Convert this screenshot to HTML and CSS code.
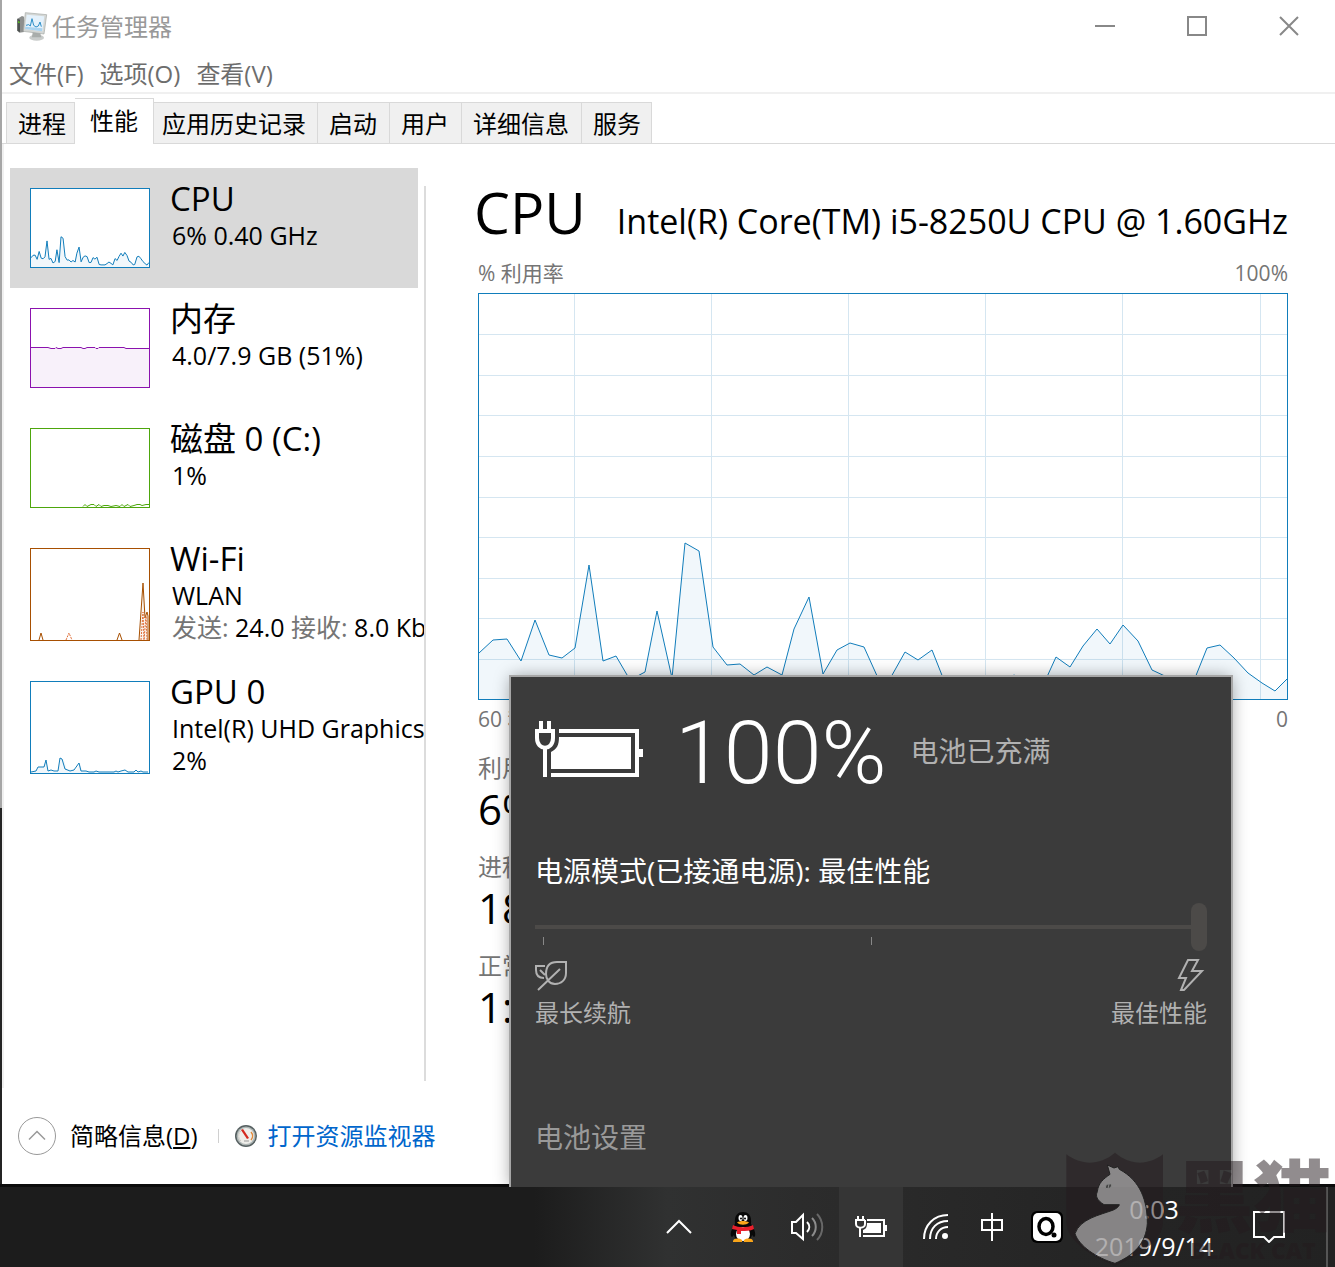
FILE: index.html
```html
<!DOCTYPE html>
<html lang="zh-CN">
<head>
    <meta charset="UTF-8">
    <meta name="viewport" content="width=device-width, initial-scale=1.0">
    <title>任务管理器</title>
    <link rel="stylesheet" href="styles.css">
</head>
<body>
    <main class="window">
        <header class="title-bar">
            <svg class="app-icon" width="32" height="30" viewBox="0 0 96 90">
                <path d="M4 20l14-8 6 2v46l-14 2-6-6z" fill="#8d8f8e"/>
                <path d="M4 20l8 3v38l-8-5z" fill="#4d5250"/>
                <path d="M6 27l5 2v5l-5-2z" fill="#58c322"/>
                <ellipse cx="62" cy="77" rx="22" ry="9" fill="#c9cccb"/>
                <path d="M50 60h22l4 16H48z" fill="#a9adab"/>
                <path d="M28 2l64 6-8 58-62-8z" fill="#d4d7d5" stroke="#a3a7a5" stroke-width="2"/>
                <path d="M32 8l53 5-6 45-52-7z" fill="#e4f1fb"/>
                <path d="M28 44l51 5-1 9-51-7z" fill="#a9d3f0"/>
                <path d="M30 40l8-2 5 4 5-22 5 20 7 5 7-3 5-12 4 14" fill="none" stroke="#2d8fc8" stroke-width="3"/>
            </svg>
            <h1 class="window-title">任务管理器</h1>
            <div class="window-buttons">
                <button type="button" aria-label="最小化">
                    <svg width="20" height="20" viewBox="0 0 20 20"><path d="M0 10h20"/></svg>
                </button>
                <button type="button" aria-label="最大化">
                    <svg width="20" height="20" viewBox="0 0 20 20"><path d="M1 1h18v18H1z"/></svg>
                </button>
                <button type="button" aria-label="关闭">
                    <svg width="20" height="20" viewBox="0 0 20 20"><path d="M1 1l18 18M19 1L1 19"/></svg>
                </button>
            </div>
        </header>

        <nav class="menu-bar">
            <button type="button">文件(F)</button>
            <button type="button">选项(O)</button>
            <button type="button">查看(V)</button>
        </nav>

        <div class="tabs" role="tablist">
            <button type="button" role="tab" class="tab">进程</button>
            <button type="button" role="tab" class="tab active" aria-selected="true">性能</button>
            <button type="button" role="tab" class="tab tight">应用历史记录</button>
            <button type="button" role="tab" class="tab">启动</button>
            <button type="button" role="tab" class="tab">用户</button>
            <button type="button" role="tab" class="tab">详细信息</button>
            <button type="button" role="tab" class="tab">服务</button>
        </div>

        <div class="content">
            <aside class="sidebar">
                <ul class="device-list">
                    <li class="device selected">
                        <svg class="thumb cpu" viewBox="0 0 810 407" preserveAspectRatio="none">
                            <use href="#cpu-area" class="area"/>
                            <use href="#cpu-line" class="line"/>
                        </svg>
                        <div class="device-info">
                            <h2>CPU</h2>
                            <p>6% 0.40 GHz</p>
                        </div>
                    </li>
                    <li class="device">
                        <svg class="thumb memory" viewBox="0 0 118 78">
                            <path class="area" d="M0 39H118V78H0z"/>
                            <path class="line" d="M0 38.500h17l3 1h4l1-1 2 1h3l2-1h18l2 1h2l2-1h8l1 1h2l1-1h25l2 1h24"/>
                        </svg>
                        <div class="device-info">
                            <h2>内存</h2>
                            <p>4.0/7.9 GB (51%)</p>
                        </div>
                    </li>
                    <li class="device">
                        <svg class="thumb disk" viewBox="0 0 118 78">
                            <path class="line" d="M52 77.500l2-2 2 2 4-2h3l2 2 3-2 2 2 3-1h4l3 1 5-1 4 1 2-2 2 2 4-2 2 2 4-1 3-1h3l2 1 4-1h4"/>
                        </svg>
                        <div class="device-info">
                            <h2>磁盘 0 (C:)</h2>
                            <p>1%</p>
                        </div>
                    </li>
                    <li class="device">
                        <svg class="thumb tall wifi" viewBox="0 0 118 91">
                            <path class="area" d="M108 91l4-57 3 35 2-7 1 29z"/>
                            <path class="line" d="M8 91l2-7 2 7M86 91l2.500-7 2.500 7M108 91l4-57 2 35 2-6 1 4v24"/>
                            <path class="line dotted" d="M35 91l3-7 3 7M110 91l2-28 1 28 2-24 1 24"/>
                        </svg>
                        <div class="device-info">
                            <h2>Wi-Fi</h2>
                            <p>WLAN</p>
                            <p><span class="muted">发送:</span> 24.0 <span class="muted">接收:</span> 8.0 Kb</p>
                        </div>
                    </li>
                    <li class="device">
                        <svg class="thumb tall cpu" viewBox="0 0 118 91">
                            <path class="area" d="M0 90l6-2 2-3h5l2-7 2 11 10 1 3-14 3 2 3 9 10 1 3-7 2 8 67 1v2H0z"/>
                            <path class="line" d="M0 90l5-1 2-4h6l2-7 2 11 3-1 3 1h4l2-13 2 1 3 10 5 2 4-1 5-7 2 8h5l3 1h5l2-1 3 1h15l2-1 2 1 3-1 4-1 3 2h6l2-2 2 2 3-1 2 1h5"/>
                        </svg>
                        <div class="device-info">
                            <h2>GPU 0</h2>
                            <p>Intel(R) UHD Graphics</p>
                            <p>2%</p>
                        </div>
                    </li>
                </ul>
            </aside>

            <section class="details">
                <div class="details-header">
                    <h2>CPU</h2>
                    <p>Intel(R) Core(TM) i5-8250U CPU @ 1.60GHz</p>
                </div>
                <div class="chart-caption">
                    <span>% 利用率</span>
                    <span>100%</span>
                </div>
                <svg class="chart cpu" viewBox="0 0 808 405" preserveAspectRatio="none">
                    <defs>
                        <path id="cpu-line" vector-effect="non-scaling-stroke" d="M0 359L14 346 28 345 42 367 56 326 70 361 83 364 96 354 110 271 124 367 137 362 151 386 166 378 178 317 193 384 206 249 220 257 234 353 248 371 261 370 275 381 288 373 303 381 315 335 330 303 344 380 358 356 371 349 385 353 399 384 412 383 426 358 439 366 453 356 468 394 481 396 508 396 522 389 535 381 549 388 562 396 577 363 591 373 604 352 618 335 631 350 644 331 659 347 673 376 688 383 701 396 712 394 728 354 741 351 755 364 769 379 783 389 796 397 809 384"/>
                        <path id="cpu-area" d="M0 359L14 346 28 345 42 367 56 326 70 361 83 364 96 354 110 271 124 367 137 362 151 386 166 378 178 317 193 384 206 249 220 257 234 353 248 371 261 370 275 381 288 373 303 381 315 335 330 303 344 380 358 356 371 349 385 353 399 384 412 383 426 358 439 366 453 356 468 394 481 396 508 396 522 389 535 381 549 388 562 396 577 363 591 373 604 352 618 335 631 350 644 331 659 347 673 376 688 383 701 396 712 394 728 354 741 351 755 364 769 379 783 389 796 397 809 384V407H0z"/>
                    </defs>
                    <path class="grid" vector-effect="non-scaling-stroke" d="M95.500 0V405M232.500 0V405M369.500 0V405M506.500 0V405M643.500 0V405M781.500 0V405M0 40.500H808M0 81.500H808M0 121.500H808M0 162.500H808M0 203.500H808M0 243.500H808M0 284.500H808M0 324.500H808M0 365.500H808"/>
                    <use href="#cpu-area" class="area"/>
                    <use href="#cpu-line" class="line"/>
                </svg>
                <div class="chart-caption below">
                    <span>60 秒</span>
                    <span>0</span>
                </div>
                <dl class="stats">
                    <dt>利用率</dt>
                    <dd>6%</dd>
                    <dt>进程</dt>
                    <dd>18</dd>
                    <dt>正常</dt>
                    <dd>1:</dd>
                </dl>
            </section>
        </div>

        <footer class="window-footer">
            <button type="button" class="fewer-details">
                <svg width="38" height="38" viewBox="0 0 38 38" fill="none" stroke="#999">
                    <circle cx="19" cy="19" r="18.500"/>
                    <path d="M11 22.500l8-8 8 8" stroke-width="1.500"/>
                </svg>
                <span>简略信息(<u>D</u>)</span>
            </button>
            <a class="resource-link" href="#">
                <svg width="24" height="24" viewBox="0 0 24 24">
                    <circle cx="12" cy="12" r="11" fill="#566061"/>
                    <circle cx="12" cy="12" r="9.500" fill="#aeb6b5"/>
                    <circle cx="12" cy="12" r="8" fill="#efeeea"/>
                    <path d="M7 17a7 7 0 0 1 1-11" fill="none" stroke="#b9b5ae" stroke-dasharray="1 1"/>
                    <path d="M17 8a6 6 0 0 1 0 8" fill="none" stroke="#e0883a" stroke-width="1.500"/>
                    <path d="M7 6l2-1 6 9-2 1z" fill="#d42a20"/>
                    <path d="M10 17h5" stroke="#999"/>
                </svg>
                <span>打开资源监视器</span>
            </a>
        </footer>
    </main>

    <footer class="taskbar">
        <button type="button" aria-label="显示隐藏的图标">
            <svg width="26" height="16" viewBox="0 0 26 16" fill="none" stroke="#fff" stroke-width="2"><path d="M1 14L13 2l12 12"/></svg>
        </button>
        <button type="button" aria-label="QQ">
            <svg width="26" height="32" viewBox="0 0 26 32">
                <path d="M5 13C4 4 8 1 13 1s9 3 8 12c3 4 5 9 4 12-1 2-2 0-3-1-1 4-4 6-9 6s-8-2-9-6c-1 1-2 3-3 1-1-3 1-8 4-12z" fill="#080808"/>
                <ellipse cx="13" cy="23" rx="7" ry="7" fill="#fff"/>
                <ellipse cx="10.500" cy="7" rx="2" ry="3" fill="#fff"/>
                <ellipse cx="15.500" cy="7" rx="2" ry="3" fill="#fff"/>
                <circle cx="11" cy="7.500" r="1" fill="#000"/>
                <circle cx="15" cy="7.500" r="1" fill="#000"/>
                <path d="M7 11.500c3-2 9-2 12 0-3 3-9 3-12 0z" fill="#f9a51a"/>
                <path d="M3 14c6 3 14 3 20 0l1 4c-4 2-8 2-13 2v3H7v-4l-5-1z" fill="#e8202c"/>
                <path d="M3 30c1-3 6-3 9-1v2H3zM23 30c-1-3-6-3-9-1v2h9z" fill="#f9a51a"/>
            </svg>
        </button>
        <button type="button" aria-label="音量">
            <svg width="34" height="30" viewBox="0 0 34 30" fill="none" stroke="#fff" stroke-width="2">
                <path d="M2 10h4l7-7v24l-7-6H2z"/>
                <path d="M17 10c3 3 3 7 0 10"/>
                <path d="M22 6c5 5 5 13 0 18" stroke="#8c8c8c"/>
                <path d="M27 2c7 7 7 19 0 26" stroke="#686868"/>
            </svg>
        </button>
        <button type="button" class="pressed" aria-label="电池">
            <svg width="32" height="24" viewBox="0 0 32 24">
                <path d="M3 1v5M8 1v5M0 5h10M5 13v9" stroke="#fff" stroke-width="2" fill="none"/>
                <path d="M1 5v4c0 5 9 5 9 0V5" stroke="#fff" stroke-width="2" fill="none"/>
                <path d="M12 5h17v16H8" stroke="#fff" stroke-width="2" fill="none"/>
                <path d="M12 8h14v10H8v-3c3-1 4-3 4-7zM30 10h2v6h-2z" fill="#fff"/>
            </svg>
        </button>
        <button type="button" class="wide" aria-label="网络">
            <svg width="26" height="26" viewBox="0 0 26 26" fill="none" stroke="#fff" stroke-width="2">
                <path d="M1 25C1 11 11 1 25 1M7 25C7 14 14 7 25 7M13 25c0-7 5-12 12-12"/>
                <circle cx="22" cy="22" r="2" fill="#fff"/>
            </svg>
        </button>
        <button type="button" class="narrow" aria-label="中文输入">
            <svg width="24" height="28" viewBox="0 0 24 28" fill="none" stroke="#fff" stroke-width="2"><path d="M2 7h20v10H2zM12 0v28"/></svg>
        </button>
        <button type="button" aria-label="输入法">
            <svg width="32" height="32" viewBox="0 0 32 32">
                <rect width="32" height="32" rx="6" fill="#000"/>
                <rect x="2" y="2" width="28" height="28" rx="5" fill="#fff"/>
                <ellipse cx="15" cy="15.500" rx="7" ry="8" fill="none" stroke="#000" stroke-width="3.500"/>
                <circle cx="23" cy="24" r="2.500" fill="#000"/>
            </svg>
        </button>
        <button type="button" class="clock">
            <time>0:03</time>
            <time>2019/9/14</time>
        </button>
        <button type="button" class="notifications" aria-label="操作中心">
            <svg width="32" height="32" viewBox="0 0 32 32" fill="none" stroke="#fff" stroke-width="2"><path d="M1 1h30v25H21l-5 5-5-5H1z"/></svg>
        </button>
        <button type="button" class="show-desktop" aria-label="显示桌面"></button>
    </footer>

    <section class="battery-flyout">
        <div class="battery-header">
            <svg width="108" height="60" viewBox="0 0 108 60">
                <path d="M6 0v10M14 0v10M10 26v30" fill="none" stroke="#fff" stroke-width="4"/>
                <path d="M2 10h16v7c0 13-16 13-16 0z" fill="none" stroke="#fff" stroke-width="4"/>
                <path d="M24 10h78v44H16" fill="none" stroke="#fff" stroke-width="4"/>
                <path d="M24 16h72v32H16V31c6-3 8-7 8-15zM104 28h4v8h-4z" fill="#fff"/>
            </svg>
            <span class="battery-percent">100%</span>
            <span class="battery-state">电池已充满</span>
        </div>
        <label class="mode-label" for="power-mode">电源模式(已接通电源): 最佳性能</label>
        <input type="range" class="mode-slider" id="power-mode" min="0" max="2" value="2">
        <div class="mode-ends">
            <div class="mode-end">
                <svg width="32" height="32" viewBox="0 0 32 32" fill="none" stroke="#b1b1b1" stroke-width="2">
                    <path d="M31 3v11c0 7-5 11-11 11-6 0-9-5-9-10C11 7 15 3 22 3zM10 7H1v4c0 5 3 8 8 8M3 31L25 10M5 11l5 5"/>
                </svg>
                <span>最长续航</span>
            </div>
            <div class="mode-end right">
                <svg width="32" height="32" viewBox="0 0 32 32" fill="none" stroke="#b1b1b1" stroke-width="2">
                    <path d="M13 1h10l-6 11h10L9 31H6l5-12H4z"/>
                </svg>
                <span>最佳性能</span>
            </div>
        </div>
        <a class="battery-settings" href="#">电池设置</a>
    </section>

    <svg class="watermark" width="270" height="115" viewBox="495 36 810 345">
        <path class="mark-dark" d="M499 43c45 34 100 34 146-5 46 39 100 39 144 5v202c0 60-80 105-144 132-65-27-146-72-146-132z"/>
        <path class="mark-cat" d="M622 75l20 9 12-4 4 8c64 34 84 95 84 162-4 60-40 96-97 120-55-16-108-52-120-89 15-45 75-56 115-71 13-6 17-12 18-16h-46c-22-14-26-26-20-39 3-26 18-38 38-52z"/>
        <path d="M617 145c-2-12 5-14 18-13 0 10-6 16-18 13zM627 132l-3 14" fill="#444" stroke="#888" stroke-width="3"/>
        <text class="mark-dark mark-name" x="826" y="258">黑猫</text>
        <text class="mark-dark mark-latin" x="870" y="358">BLACK CAT</text>
    </svg>
</body>
</html>
```
FILE: styles.css
```css
* {
    box-sizing: border-box;
    margin: 0;
    padding: 0;
}

body {
    position: relative;
    display: flex;
    flex-direction: column;
    min-height: 100vh;
    overflow-x: hidden;
    background: linear-gradient(#a6a6a6 0 808px, #242424 808px);
    color: #000;
    font-family: "Open Sans", "Noto Sans CJK SC", sans-serif;
    font-size: 24px;
    font-weight: 400;
    line-height: 32px;
}

button {
    border: none;
    background: none;
    color: inherit;
    font: inherit;
}

h1, h2 {
    font-weight: inherit;
}

/* Task manager window */
.window {
    flex: 1;
    display: flex;
    flex-direction: column;
    margin-left: 2px;
    background: #fff;
}

.title-bar {
    display: flex;
    align-items: center;
    height: 54px;
    padding-left: 14px;
    color: #999;
}

.window-title {
    flex: 1;
    margin-left: 4px;
    font-size: 24px;
}

.window-buttons {
    display: flex;
}

.window-buttons button {
    width: 92px;
    height: 52px;
}

.window-buttons svg {
    fill: none;
    stroke: #888;
    stroke-width: 2;
}

.menu-bar {
    display: flex;
    gap: 16px;
    height: 40px;
    padding: 4px 7px;
    border-bottom: 2px solid #f0f0f0;
    color: #6d6d6d;
    font-size: 24px;
}

.tabs {
    display: flex;
    align-items: flex-end;
    height: 50px;
    padding-left: 4px;
    border-bottom: 1px solid #d9d9d9;
}

.tab {
    height: 41px;
    padding: 2px 12px 0 11px;
    border: 1px solid #d9d9d9;
    border-left: none;
    border-bottom: none;
    background: #f0f0f0;
}

.tab:first-child {
    border-left: 1px solid #d9d9d9;
    padding-right: 8px;
}

.tab:last-child {
    padding-right: 10px;
}

.tab.tight {
    padding-left: 8px;
    padding-right: 11px;
}

.tab.active {
    height: 46px;
    margin-bottom: -1px;
    padding: 0 15px 2px;
    background: #fff;
}

.content {
    flex: 1;
    display: flex;
    border-left: 2px solid #f0f0f0;
}

/* Device list */
.sidebar {
    flex: 0 0 422px;
    display: flex;
    padding: 24px 0 8px 6px;
    overflow: hidden;
    border-right: 2px solid;
    border-image: linear-gradient(transparent 43px, #dcdcdc 43px calc(100% - 8px), transparent 0) 1;
}

.device-list {
    width: 100%;
    list-style: none;
}

.device {
    display: flex;
    gap: 20px;
    min-height: 120px;
    padding-left: 20px;
    white-space: nowrap;
}

.device.selected {
    margin-right: 6px;
    background: #d9d9d9;
}

.thumb {
    flex: none;
    width: 120px;
    height: 80px;
    margin: 20px 0;
    border: 1px solid;
    background: #fff;
}

.thumb.tall {
    height: 93px;
}

.device-info {
    padding-top: 11px;
}

.device-info h2 {
    font-size: 33px;
    line-height: 40px;
}

.device-info p {
    padding-left: 2px;
    font-size: 25px;
    word-spacing: normal;
}

.muted {
    color: #757575;
}

/* Graph colours */
.line,
.grid {
    fill: none;
    stroke: currentColor;
}

.area {
    fill: currentColor;
    opacity: 0.06;
}

.grid {
    stroke: #d5e6f1;
}

.dotted {
    stroke: #e0703a;
    stroke-dasharray: 2 1;
}

.cpu {
    color: #117dbb;
}

.memory {
    color: #8b12ae;
}

.disk {
    color: #4da60c;
}

.wifi {
    color: #a74f01;
}

/* Performance details */
.details {
    flex: 1;
    min-width: 0;
    padding: 32px 47px 0 48px;
}

.details-header {
    display: flex;
    align-items: baseline;
    justify-content: space-between;
    height: 81px;
    line-height: 72px;
    white-space: nowrap;
}

.details-header h2 {
    font-size: 57px;
}

.details-header p {
    font-size: 34px;
}

.chart-caption {
    display: flex;
    justify-content: space-between;
    margin-left: 4px;
    padding-bottom: 4px;
    color: #757575;
    font-size: 21px;
}

.chart-caption.below {
    padding-top: 3px;
}

.chart {
    display: block;
    width: calc(100% - 4px);
    height: 407px;
    margin-left: 4px;
    border: 1px solid;
}

.stats {
    padding: 13px 0 0 4px;
}

.stats dt {
    color: #757575;
}

.stats dd {
    margin-bottom: 17px;
    font-size: 42px;
    line-height: 50px;
}

.window-footer {
    display: flex;
    align-items: center;
    height: 96px;
    padding-left: 16px;
}

.fewer-details {
    display: flex;
    align-items: center;
    gap: 14px;
}

.resource-link {
    display: flex;
    align-items: center;
    gap: 10px;
    margin-left: 20px;
    padding-left: 16px;
    background: linear-gradient(#d0d0d0, #d0d0d0) left center / 1px 14px no-repeat;
    color: #0066cc;
    text-decoration: none;
}

/* Taskbar */
.taskbar {
    display: flex;
    justify-content: flex-end;
    height: 83px;
    border-top: 3px solid #0c0c0c;
    background: linear-gradient(90deg, #1c1c1c 40%, #303131 50%, #2c2c2c 60%, #252525 80%, #222);
    color: #fff;
}

.taskbar button {
    display: flex;
    align-items: center;
    justify-content: center;
    width: 64px;
}

.taskbar .pressed {
    background: #353535;
}

.taskbar .wide {
    width: 66px;
}

.taskbar .narrow {
    width: 46px;
}

.taskbar .clock {
    flex-direction: column;
    width: 150px;
    padding-top: 2px;
    font-size: 25px;
    line-height: 37px;
}

.taskbar .notifications {
    width: 80px;
    margin-right: 17px;
}

.taskbar .show-desktop {
    width: 9px;
    border-left: 2px solid #555;
}

/* Battery flyout, sits on the taskbar */
.battery-flyout {
    position: absolute;
    right: 104px;
    bottom: 80px;
    display: flex;
    flex-direction: column;
    width: 720px;
    height: 510px;
    padding: 18px 24px 30px;
    background: #3b3b3b;
    box-shadow: 0 0 0 2px #a6a6a6, 0 0 16px rgba(0, 0, 0, 0.4);
    clip-path: inset(-20px -20px 0 -20px);
    color: #fff;
    font-size: 28px;
    line-height: 40px;
}

.battery-header {
    display: flex;
    align-items: center;
    height: 112px;
}

.battery-percent {
    margin: 0 24px 0 32px;
    padding-top: 4px;
    font-family: Roboto, sans-serif;
    font-size: 88px;
    font-weight: 300;
    line-height: 108px;
}

.battery-state {
    color: #b1b1b1;
}

.mode-label {
    margin-top: 44px;
}

.mode-slider {
    appearance: none;
    width: 100%;
    height: 48px;
    margin-top: 12px;
    background:
        linear-gradient(#4c4a48, #4c4a48) left center / 100% 4px no-repeat,
        linear-gradient(#888, #888) 8px 34px / 1px 8px no-repeat,
        linear-gradient(#888, #888) center 34px / 1px 8px no-repeat;
}

.mode-slider::-webkit-slider-thumb {
    appearance: none;
    width: 16px;
    height: 48px;
    border-radius: 8px;
    background: #4c4a48;
}

.mode-ends {
    display: flex;
    justify-content: space-between;
    margin-top: 8px;
    color: #b1b1b1;
    font-size: 24px;
    line-height: 32px;
}

.mode-end {
    display: flex;
    flex-direction: column;
    gap: 6px;
}

.mode-end.right {
    align-items: flex-end;
}

.battery-settings {
    margin-top: auto;
    color: #999;
    text-decoration: none;
}

/* Translucent mark over the corner of the screen */
.watermark {
    position: absolute;
    right: 0;
    bottom: 0;
    pointer-events: none;
}

.mark-dark {
    fill: rgba(35, 26, 29, 0.5);
}

.mark-cat {
    fill: rgba(200, 200, 200, 0.6);
    stroke: #222;
    stroke-width: 3;
}

.mark-name {
    font-size: 234px;
    font-weight: 900;
}

.mark-latin {
    font-family: "Open Sans", sans-serif;
    font-size: 68px;
    font-weight: 800;
}
```
